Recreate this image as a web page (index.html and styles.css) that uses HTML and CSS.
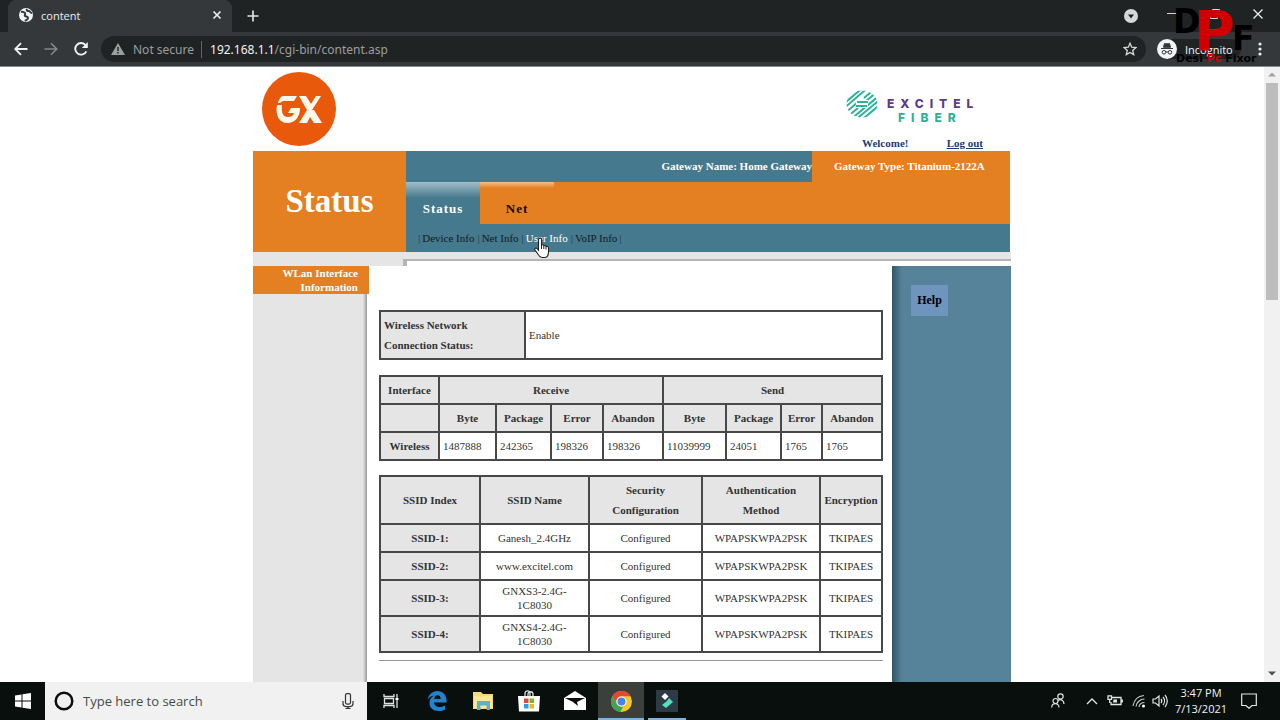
FILE: index.html
```html
<!DOCTYPE html>
<html lang="en">
<head>
<meta charset="utf-8">
<title>content</title>
<link rel="stylesheet" href="styles.css">
</head>
<body>
<header class="browser">
  <div class="tabstrip">
    <div class="tab">
      <svg class="favicon" width="14" height="14" viewBox="0 0 14 14"><circle cx="7" cy="7" r="7" fill="#f1f3f4"/><path d="M2 4c2-1 3 0 4 1s-1 2 0 3 3 0 3 2-2 2-3 3M8 1c-1 2 1 2 2 2s1 2 3 2" fill="none" stroke="#35383a" stroke-width="2"/></svg>
      <span class="tab-title">content</span>
      <button class="icon-btn" aria-label="Close tab"><svg width="10" height="10" viewBox="0 0 10 10"><path d="M1.500 1.500l7 7M8.500 1.500l-7 7" stroke="#e8eaed" stroke-width="1.700"/></svg></button>
    </div>
    <button class="icon-btn new-tab" aria-label="New tab"><svg width="12" height="12" viewBox="0 0 12 12"><path d="M6 .5v11M.5 6h11" stroke="#e0e2e4" stroke-width="1.700"/></svg></button>
    <div class="window-controls">
      <button class="icon-btn" aria-label="Search tabs"><svg width="14" height="14" viewBox="0 0 14 14"><circle cx="7" cy="7" r="7" fill="#d5d7d9"/><path d="M4 5.500h6L7 9.500z" fill="#202324"/></svg></button>
      <button class="icon-btn control" aria-label="Minimize"><svg width="10" height="10" viewBox="0 0 10 10"><path d="M0 4.500h10" stroke="#d5d7d9"/></svg></button>
      <button class="icon-btn control" aria-label="Restore"><svg width="10" height="10" viewBox="0 0 10 10"><path d="M.5 2.500h7v7h-7zM2.500 2V.5h7v7H8" fill="none" stroke="#d5d7d9"/></svg></button>
      <button class="icon-btn control" aria-label="Close"><svg width="10" height="10" viewBox="0 0 10 10"><path d="M.5.5l9 9M9.500.5l-9 9" stroke="#f1f3f4" stroke-width="1.200"/></svg></button>
    </div>
  </div>
  <div class="toolbar">
    <button class="icon-btn nav-btn" aria-label="Back"><svg width="14" height="14" viewBox="0 0 14 14"><path d="M13.500 7H1.500M7 1.200L1.200 7 7 12.800" fill="none" stroke="#f1f3f4" stroke-width="1.800"/></svg></button>
    <button class="icon-btn nav-btn" aria-label="Forward"><svg width="14" height="14" viewBox="0 0 14 14"><path d="M.5 7h12M7 1.200L12.800 7 7 12.800" fill="none" stroke="#85888a" stroke-width="1.600"/></svg></button>
    <button class="icon-btn nav-btn" aria-label="Reload"><svg width="14" height="14" viewBox="0 0 14 14"><path d="M12.300 9.300A5.800 5.800 0 1 1 11.400 3" fill="none" stroke="#f1f3f4" stroke-width="1.900"/><path d="M13.800 0v6H7.800z" fill="#f1f3f4"/></svg></button>
    <div class="omnibox">
      <svg width="14" height="12" viewBox="0 0 14 12"><path d="M7 0l7 12H0z" fill="#9aa0a0"/><path d="M7 4v4M7 9v1.500" stroke="#202324" stroke-width="1.500"/></svg>
      <span class="insecure">Not secure</span>
      <div class="url" role="textbox" contenteditable="true" aria-label="Address"><span class="host">192.168.1.1</span>/cgi-bin/content.asp</div>
      <button class="icon-btn" aria-label="Bookmark"><svg width="14" height="14" viewBox="0 0 14 14"><path d="M7 1.300l1.700 3.900 4.200.4-3.200 2.800 1 4.200L7 10.400l-3.700 2.200 1-4.200L1.100 5.600l4.200-.4z" fill="none" stroke="#d5d7d9" stroke-width="1.300"/></svg></button>
    </div>
    <button class="incognito"><svg width="20" height="20" viewBox="0 0 20 20"><circle cx="10" cy="10" r="10" fill="#f1f3f4"/><path d="M4 9.500h12M6.500 8.300l1-3.800 1.300.3h2.400l1.300-.3 1 3.800z" fill="#35383a" stroke="#35383a" stroke-width="1"/><g fill="none" stroke="#35383a"><circle cx="7" cy="13.300" r="1.800"/><circle cx="13" cy="13.300" r="1.800"/><path d="M8.800 13h2.400"/></g></svg><span>Incognito</span></button>
    <button class="icon-btn menu" aria-label="Menu"><svg width="4" height="14" viewBox="0 0 4 14" fill="#e8eaed"><circle cx="2" cy="2" r="1.600"/><circle cx="2" cy="7" r="1.600"/><circle cx="2" cy="12" r="1.600"/></svg></button>
  </div>
  <div class="watermark" aria-hidden="true">
    <span class="wm-d">D</span><span class="wm-p">P</span><span class="wm-f">F</span>
    <span class="wm-name">Desi <b>Pc</b> Fixor</span>
  </div>
</header>

<div class="viewport">
  <div class="scroll-content">
  <div class="router">
    <div class="brand">
      <svg class="gx" width="76" height="76" viewBox="0 0 76 76"><circle cx="38" cy="37" r="37" fill="#e9590c"/>
        <g fill="#fff9ec"><path d="M22 24h14l-3 5H23c-2 0-3 1-4 2h-2c1-4 3-7 5-7z"/><path d="M16 33h5c-1 8 1 12 6 12 3 0 5-1 6-4h-6l3-5h9c0 9-5 15-13 15-7 0-12-7-10-18z"/><path d="M38 24h7l5 8 5-8h5l-9 14h-5z"/><path d="M46 38h7l8 13h-8l-4-6-3 6h-8z"/></g></svg>
      <div class="account">
        <div class="excitel">
          <svg width="32" height="30" viewBox="0 0 32 30"><defs><clipPath id="disc"><ellipse cx="16" cy="14" rx="15.500" ry="13.500"/></clipPath></defs><g clip-path="url(#disc)"><path d="M-6 17L20-5M-4 20L25-5M-2 24L12 12M18 8L32-4M1 27L12 18M20 11L36-2M4 30L34 5M8 31L36 8M12 33L36 13M16 34L38 16" stroke="#2db29a" stroke-width="2"/><path d="M10 10h12v8H10z" fill="#fff"/><path d="M11 12h11M10 16h11" stroke="#2db29a" stroke-width="1.800"/></g></svg>
          <div class="wordmark"><span class="word-top">EXCITEL</span><span class="word-bottom">FIBER</span></div>
        </div>
        <div class="greeting"><span>Welcome!</span><a href="#">Log out</a></div>
      </div>
    </div>

    <div class="banner">
      <h1 class="title">Status</h1>
      <div class="banner-main">
        <div class="gateway"><span class="gateway-name">Gateway Name: Home Gateway</span><span class="gateway-type">Gateway Type: Titanium-2122A</span></div>
        <nav class="main-nav"><a class="active" href="#">Status</a><a href="#">Net</a></nav>
        <nav class="sub-nav"><a href="#">Device Info</a><a href="#">Net Info</a><a class="active" href="#">User Info</a><a href="#">VoIP Info</a></nav>
      </div>
    </div>
    <div class="ledge"><div class="ledge-left"></div><div class="ledge-right"></div></div>

    <div class="columns">
      <aside class="side"><a class="side-item" href="#">WLan Interface Information</a></aside>
      <main class="content">
        <table class="grid">
          <colgroup><col class="w-145"><col></colgroup>
          <tr><th class="left">Wireless Network Connection Status:</th><td>Enable</td></tr>
        </table>
        <table class="grid traffic">
          <colgroup><col class="w-59"><col class="w-57"><col class="w-55"><col class="w-52"><col class="w-60"><col class="w-63"><col class="w-55"><col class="w-41"><col></colgroup>
          <tr><th>Interface</th><th colspan="4">Receive</th><th colspan="4">Send</th></tr>
          <tr><th></th><th>Byte</th><th>Package</th><th>Error</th><th>Abandon</th><th>Byte</th><th>Package</th><th>Error</th><th>Abandon</th></tr>
          <tr><th>Wireless</th><td>1487888</td><td>242365</td><td>198326</td><td>198326</td><td>11039999</td><td>24051</td><td>1765</td><td>1765</td></tr>
        </table>
        <table class="grid centered">
          <colgroup><col class="w-100"><col class="w-109"><col class="w-113"><col class="w-118"><col></colgroup>
          <tr><th>SSID Index</th><th>SSID Name</th><th>Security<br>Configuration</th><th>Authentication<br>Method</th><th>Encryption</th></tr>
          <tr><th>SSID-1:</th><td>Ganesh_2.4GHz</td><td>Configured</td><td>WPAPSKWPA2PSK</td><td>TKIPAES</td></tr>
          <tr><th>SSID-2:</th><td>www.excitel.com</td><td>Configured</td><td>WPAPSKWPA2PSK</td><td>TKIPAES</td></tr>
          <tr><th>SSID-3:</th><td>GNXS3-2.4G-<br>1C8030</td><td>Configured</td><td>WPAPSKWPA2PSK</td><td>TKIPAES</td></tr>
          <tr><th>SSID-4:</th><td>GNXS4-2.4G-<br>1C8030</td><td>Configured</td><td>WPAPSKWPA2PSK</td><td>TKIPAES</td></tr>
        </table>
        <hr class="rule">
      </main>
      <aside class="help"><a class="help-link" href="#">Help</a></aside>
    </div>
    <svg class="cursor" width="16" height="22" viewBox="0 0 16 22"><path d="M5 1.500c1.500-1 2.500 0 2.500 1V8c1-.6 2-.3 2.300.6 1-.4 2 0 2.200.9 1.300-.4 2.500.3 2.500 1.500v4c0 3-1 5.500-4 5.500H8c-2 0-3-1.500-4-3.200L1 13c-.8-1.500 1-2.500 2-1.500l1.500 1.800V2.500z" fill="#fff" stroke="#222" stroke-width="1.100"/><path d="M7.500 8v4M9.800 9v3M12 10v2.500" stroke="#222"/></svg>
  </div>
  </div>
  <div class="scrollbar">
    <svg width="8" height="5" viewBox="0 0 8 5"><path d="M0 4.500h8L4 .5z" fill="#a3a3a3"/></svg>
    <div class="thumb"></div>
    <svg class="arrow-down" width="8" height="5" viewBox="0 0 8 5"><path d="M0 .5h8L4 4.500z" fill="#505050"/></svg>
  </div>
</div>

<footer class="taskbar">
  <button class="task start" aria-label="Start"><svg width="16" height="16" viewBox="0 0 16 16" fill="#fff"><path d="M0 2.400L6.500 1.500v6H0zM7.500 1.300L16 0v7.500H7.500zM0 8.500h6.500v6L0 13.600zM7.500 8.500H16V16l-8.500-1.300z"/></svg></button>
  <div class="search">
    <svg width="20" height="20" viewBox="0 0 20 20"><circle cx="10" cy="10" r="8.300" fill="none" stroke="#0b0f0d" stroke-width="2.500"/></svg>
    <input type="search" aria-label="Type here to search" placeholder="Type here to search">
    <svg width="12" height="16" viewBox="0 0 12 16" fill="none" stroke="#333" stroke-width="1.200"><rect x="3.500" y=".6" width="5" height="10.500" rx="1.500"/><path d="M1 8v2.500c0 2 1.500 3 3 3h4c1.500 0 3-1 3-3V8M6 13.500v2M3.500 15.400h5"/></svg>
  </div>
  <button class="task" aria-label="Task view"><svg width="16" height="16" viewBox="0 0 16 16" fill="none" stroke="#dfe2e0" stroke-width="1.300"><path d="M1 1v2.500h10V1M1 15v-2.500h10V15M1.500 5.500h9v5h-9zM14 1v14"/><path d="M12.500 5h3v2h-3z" fill="#fff" stroke="none"/></svg></button>
  <button class="task" aria-label="Edge"><svg width="20" height="20" viewBox="0 0 20 20"><path d="M.5 9C1.500 3.500 5.500 0 10.300 0c5.500 0 9.200 4 9.200 9.300v2.200H7c.3 3 2.600 4.500 5.800 4.500 2 0 3.800-.6 5.200-1.500v4c-1.600 1-3.700 1.500-6.300 1.500C6 20 2.500 16.800 2.500 12c0-3.300 1.800-6 4.800-7.400C4.500 4.800 2 6.300.5 9zM7.200 8h6.500c0-2.300-1.100-3.700-3.100-3.700S7.500 5.800 7.200 8z" fill="#2083d2"/></svg></button>
  <button class="task" aria-label="File Explorer"><svg width="20" height="18" viewBox="0 0 20 18"><path d="M0 0h8l2 2h10v15H0z" fill="#f6d978"/><path d="M1 4h18v12H1z" fill="#fbe896"/><path d="M4 9h13v9h-3.500v-4.500h-6V18H4z" fill="#5ab4c9"/></svg></button>
  <button class="task" aria-label="Store"><svg width="22" height="22" viewBox="0 0 22 22"><path d="M7 6V3.500C7 0 12 0 12 3.500V6M10 6V4c0-3 5-3 5 0v2" fill="none" stroke="#d9dcda" stroke-width="1.300"/><path d="M0 6h22l-1 15.500H1z" fill="#fff"/><path d="M6 8.500h4.500v4.500H6z" fill="#e04a2f"/><path d="M11.500 8.500H16v4.500h-4.500z" fill="#7bb32e"/><path d="M6 14h4.500v4.500H6z" fill="#2f9fe0"/><path d="M11.500 14H16v4.500h-4.500z" fill="#f4b51e"/></svg></button>
  <button class="task" aria-label="Mail"><svg width="22" height="20" viewBox="0 0 22 20"><path d="M0 7L11 0l11 7v12H0z" fill="#fff"/><path d="M1 7h20l-8 4 1 4-5-4z" fill="#080d0b"/></svg></button>
  <button class="task selected" aria-label="Chrome"><svg width="21" height="21" viewBox="0 0 20 20"><circle cx="10" cy="10" r="10" fill="#f6c62c"/><path d="M10 0a10 10 0 0 1 8.700 5H10a5 5 0 0 0-4.300 7.500L1.300 5A10 10 0 0 1 10 0z" fill="#e04936"/><path d="M1.300 5l4.400 7.500A5 5 0 0 0 11.500 14.800L9 20A10 10 0 0 1 1.300 5z" fill="#3ba457"/><circle cx="10" cy="10" r="4.800" fill="#fff"/><circle cx="10" cy="10" r="3.800" fill="#4583ee"/></svg></button>
  <button class="task running" aria-label="Filmora"><svg width="22" height="22" viewBox="0 0 22 22"><path d="M0 0h22v22H0z" fill="#2c3b45"/><path d="M9 3l3.500 3.500L9 10 5.500 6.500z" fill="#fff"/><path d="M13 8l4 4-7 6-4-3 5-4z" fill="#52dfc0"/></svg></button>
  <div class="tray">
    <button class="icon-btn" aria-label="People"><svg width="14" height="16" viewBox="0 0 14 16" fill="none" stroke="#e3e6e4" stroke-width="1.200"><circle cx="9.500" cy="3.500" r="2.700"/><path d="M7 7.500c3-2 6 0 6 3.500"/><circle cx="4.500" cy="8" r="2.500"/><path d="M.7 14.500c0-5 7-5 7.300 0"/></svg></button>
    <button class="icon-btn chevron" aria-label="Show hidden icons"><svg width="12" height="8" viewBox="0 0 12 8"><path d="M1 7l5-5 5 5" fill="none" stroke="#e3e6e4" stroke-width="1.300"/></svg></button>
    <svg width="16" height="12" viewBox="0 0 16 12" fill="none" stroke="#e3e6e4" stroke-width="1.300"><path d="M5 2.500h9v7H4V7M15.300 4.500v3"/><path d="M1 .8h3.500v3.500H1zM2.700 4.500V8"/><path d="M6.500 4.500H10v3H6z" fill="#e3e6e4" stroke="none"/></svg>
    <svg class="wifi" width="14" height="14" viewBox="0 0 14 14" fill="none" stroke="#c5cac7" stroke-width="1.200"><path d="M1 12C2 6 6 2 12 1.500M4 12.500c.5-4 4-7.500 8.500-7.500M7 13c.5-3 2.500-4.500 5.500-4.500"/><circle cx="11.500" cy="12" r="1.500" fill="#fff" stroke="none"/></svg>
    <svg width="16" height="14" viewBox="0 0 16 14" fill="none" stroke="#e3e6e4" stroke-width="1.200"><path d="M1 5v4h2.500L7 12V2L3.500 5zM9 5c1 1.200 1 2.800 0 4M11 3c2 2.300 2 5.700 0 8M13 1c3 3.300 3 8.700 0 12"/></svg>
    <div class="clock"><time>3:47 PM</time><time>7/13/2021</time></div>
    <button class="icon-btn" aria-label="Notifications"><svg width="16" height="16" viewBox="0 0 16 16"><path d="M.7 1h14.600v11.500H11L8 15.300 5 12.500H.7z" fill="none" stroke="#e3e6e4" stroke-width="1.200"/></svg></button>
  </div>
</footer>
</body>
</html>
```
FILE: styles.css
```css
* { box-sizing: border-box; }
body {
  margin: 0;
  height: 100vh;
  display: flex;
  flex-direction: column;
  overflow: hidden;
  background: #fff;
  font-family: "Open Sans", "Noto Sans", sans-serif;
}
svg { display: block; flex: none; }
a { color: inherit; text-decoration: none; }
.icon-btn {
  display: flex;
  align-items: center;
  justify-content: center;
  padding: 0;
  border: 0;
  background: none;
}

/* Browser frame */
.browser { position: relative; background: #35383a; border-bottom: 1px solid #888a8b; }
.tabstrip { display: flex; align-items: center; height: 32px; padding-left: 8px; background: #202324; }
.tab {
  display: flex;
  align-items: center;
  gap: 8px;
  width: 224px;
  height: 32px;
  padding: 0 10px 2px 11px;
  border-radius: 8px 8px 0 0;
  background: #35383a;
  color: #eceeef;
  font-size: 11px;
}
.tab-title { flex: 1; }
.new-tab { margin-left: 15px; }
.window-controls { display: flex; align-items: center; margin-left: auto; padding-right: 17px; }
.control { height: 26px; margin-left: 33px; padding-bottom: 4px; }
.control:nth-child(2) { margin-left: 29px; }
.toolbar { display: flex; align-items: center; height: 34px; padding-left: 14px; }
.nav-btn { width: 14px; margin-right: 16px; }
.nav-btn:nth-child(3) { margin-right: 13px; }
.omnibox {
  display: flex;
  align-items: center;
  flex: 1;
  height: 26px;
  padding: 0 9px 0 10px;
  border-radius: 13px;
  background: #202324;
  color: #9a9e9f;
  font-family: "Noto Sans", sans-serif;
  font-size: 12px;
}
.insecure { margin: 0 8px; padding-right: 7px; border-right: 1px solid #606466; }
.url { flex: 1; }
.host { color: #f1f3f4; }
.incognito {
  display: flex;
  align-items: center;
  gap: 8px;
  width: 84px;
  margin-left: 11px;
  padding: 0;
  border: 0;
  border-radius: 12px;
  background: #202324;
  color: #f1f3f4;
  font: 11px "Open Sans", "Noto Sans", sans-serif;
}
.menu { margin: 0 18px 0 17px; }

.watermark {
  position: absolute;
  top: 8px;
  right: 24px;
  width: 80px;
  height: 58px;
  color: #000;
  font-family: "DejaVu Sans", sans-serif;
  font-weight: 700;
  line-height: 1;
}
.watermark span { position: absolute; line-height: normal; }
.wm-d { left: -3px; top: -6px; font-size: 33px; }
.wm-p { left: 18px; top: -10px; font-size: 56px; color: #d00000; }
.wm-f { left: 56px; top: 11px; font-size: 33px; }
.wm-name { left: 0; top: 44px; font-size: 11px; white-space: nowrap; }
.wm-name b { color: #d00000; }

/* Page area */
.viewport { flex: 1; display: flex; min-height: 0; overflow: hidden; }
.scroll-content { flex: 1; display: flex; justify-content: center; overflow: hidden; }
.router {
  position: relative;
  display: flex;
  flex-direction: column;
  width: 758px;
  font-family: "Liberation Serif", serif;
  font-size: 11px;
}
.scrollbar {
  display: flex;
  flex-direction: column;
  align-items: center;
  width: 16px;
  padding: 5px 0 6px;
  background: #f1f1f1;
}
.thumb { width: 12px; height: 217px; margin-top: 6px; background: #bdbdbd; }
.arrow-down { margin-top: auto; }

.brand { display: flex; justify-content: space-between; height: 84px; padding: 5px 28px 0 8px; }
.account { display: flex; flex-direction: column; justify-content: space-between; width: 137px; }
.excitel { display: flex; gap: 9px; padding-top: 18px; }
.wordmark {
  display: flex;
  flex-direction: column;
  padding-top: 7px;
  font: 800 12px/14px Inter, sans-serif;
  letter-spacing: 6px;
}
.word-top { color: #5b3b8c; }
.word-bottom { padding-left: 11px; color: #2db29a; }
.greeting { display: flex; justify-content: space-between; padding-left: 16px; color: #1d3c78; font-weight: 700; line-height: 15px; }
.greeting a { text-decoration: underline; }

.banner { display: flex; height: 101px; margin-right: 1px; background: #e48022; color: #fff; }
.title { width: 153px; margin: 0; font-size: 33px; line-height: 101px; text-align: center; }
.banner-main { flex: 1; display: flex; flex-direction: column; }
.gateway { display: flex; height: 31px; font-weight: 700; line-height: 30px; }
.gateway-name { flex: 1; background: #45798d; text-align: right; }
.gateway-type { width: 198px; padding-left: 22px; }
.main-nav { display: flex; flex: 1; }
.main-nav a {
  width: 74px;
  padding-top: 13px;
  background: linear-gradient(rgba(255, 255, 255, 0.5), rgba(255, 255, 255, 0) 6px);
  color: #1a0d00;
  font-size: 13px;
  font-weight: 700;
  letter-spacing: 1px;
  line-height: 28px;
  text-align: center;
}
.main-nav .active {
  background: linear-gradient(rgba(255, 255, 255, 0.5), rgba(255, 255, 255, 0) 16px) #45798d;
  color: #fff;
}
.sub-nav { display: flex; height: 28px; padding-left: 12px; background: #45798d; color: #101c22; line-height: 28px; }
.sub-nav a::before { content: "|"; padding-right: 2px; color: #1f3a46; }
.sub-nav a { padding-right: 3px; }
.sub-nav a:last-child::after { content: "|"; padding-left: 2px; color: #1f3a46; }
.sub-nav .active { color: #fff; }

.ledge { display: flex; height: 14px; background: #e5e5e5; }
.ledge-left { width: 150px; }
.ledge-right { flex: 1; margin-top: 7px; border-top: 2px solid #b5b5b5; border-left: 4px solid #b5b5b5; background: #fff; }

.columns { display: flex; flex: 1; min-height: 0; }
.side {
  width: 116px;
  background: linear-gradient(to left, #fff 2px, #999 2px, #e5e5e5 6px);
}
.side-item {
  display: block;
  padding: 0 11px 0 20px;
  background: #e48022;
  color: #fff;
  font-weight: 700;
  line-height: 14px;
  text-align: right;
}
.content { flex: 1; min-width: 0; padding: 44px 9px 0 10px; }
.help { width: 119px; padding: 19px; background: linear-gradient(to right, #315565, #56829a 10px); }
.help-link {
  display: inline-block;
  width: 37px;
  background: #6f94bd;
  color: #000;
  font-size: 12px;
  font-weight: 700;
  line-height: 31px;
  text-align: center;
}

.grid { width: 100%; margin-bottom: 15px; border-collapse: collapse; table-layout: fixed; color: #333; }
.grid th, .grid td { height: 28px; padding: 0 2px; border: 2px solid #484848; line-height: 14px; text-align: left; }
.grid th { padding: 3px 1px; background: #e5e5e5; line-height: 20px; text-align: center; }
.grid .left { padding: 3px 40px 3px 3px; text-align: left; }
.grid td { padding: 3px; }
.traffic { margin-bottom: 14px; }
.centered td { text-align: center; }
.w-41 { width: 41px; }
.w-52 { width: 52px; }
.w-55 { width: 55px; }
.w-57 { width: 57px; }
.w-59 { width: 59px; }
.w-60 { width: 60px; }
.w-63 { width: 63px; }
.w-100 { width: 100px; }
.w-109 { width: 109px; }
.w-113 { width: 113px; }
.w-118 { width: 118px; }
.w-145 { width: 145px; }
.rule { height: 1px; margin: -8px 0 0; border: 0; background: #999; }

.cursor { position: absolute; left: 281px; top: 170px; }

/* Taskbar */
.taskbar { display: flex; align-items: stretch; height: 38px; background: #080f0c; }
.task {
  display: flex;
  align-items: center;
  justify-content: center;
  width: 46px;
  padding: 0;
  border: 0;
  background: none;
}
.start { width: 45px; }
.selected { background: #3b403d; box-shadow: inset 0 -2px #7fb4dc; }
.running { width: 38px; margin-left: 4px; box-shadow: inset 0 -2px #7fb4dc; }
.search { display: flex; align-items: center; gap: 9px; width: 322px; margin-right: 1px; padding: 0 13px 0 9px; background: #f1f1f1; }
.search input {
  flex: 1;
  min-width: 0;
  padding: 0;
  border: 0;
  background: none;
  font: 13px "Open Sans", "Noto Sans", sans-serif;
}
.search input::placeholder { color: #454c48; opacity: 1; }
.tray { display: flex; align-items: center; margin-left: auto; padding-right: 23px; color: #f1f3f2; }
.chevron { margin: 0 9px 0 21px; }
.wifi { margin: 0 6px 0 9px; }
.clock { display: flex; flex-direction: column; width: 66px; font-size: 11px; line-height: 16px; text-align: center; }
.clock + .icon-btn { margin-left: 7px; }
```
